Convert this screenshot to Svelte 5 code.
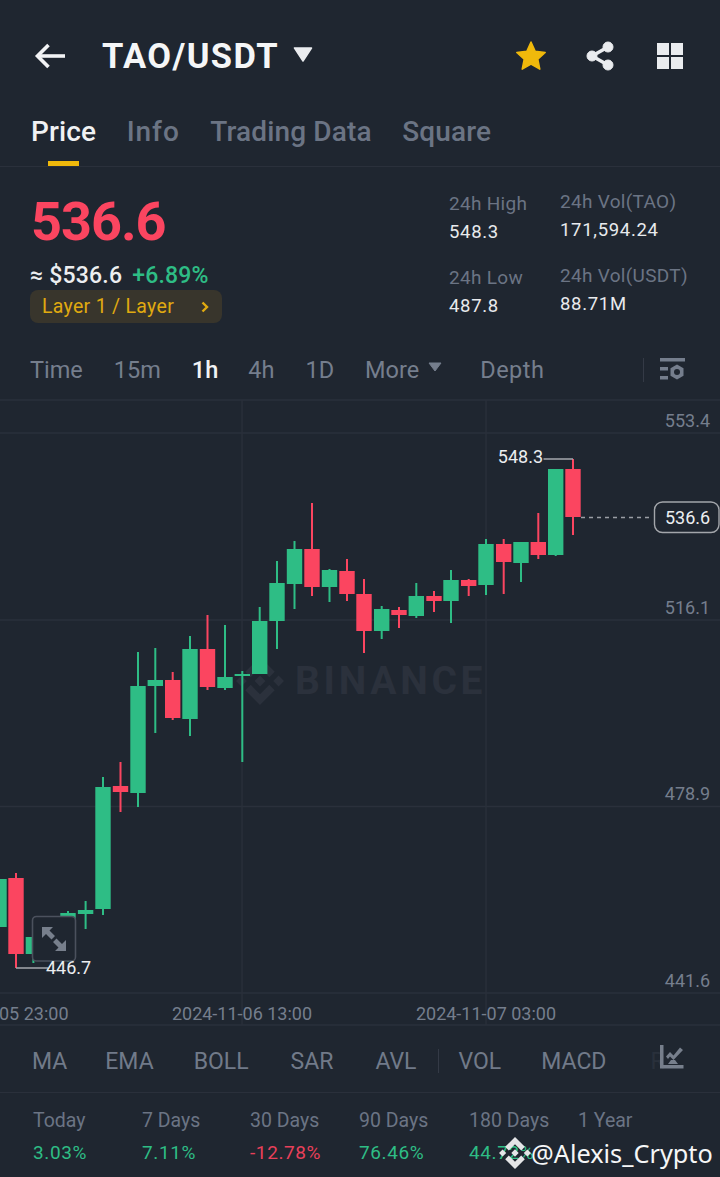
<script lang="ts">
  const tabs = ['Price', 'Info', 'Trading Data', 'Square'];
  const up = '#2ebd85';
  const down = '#fb4560';

  // [x, body top, body bottom, wick top, wick bottom, rising]
  const candles: [number, number, number, number, number, boolean][] = [
    [-1, 879, 927, 879, 927, true],
    [16, 878, 954, 873, 968, false],
    [33.4, 937, 954, 937, 963, true],
    [68, 913, 925, 911, 962, true],
    [85.6, 910, 914, 901, 929, true],
    [103, 787, 909, 777, 915, true],
    [120.5, 786, 792, 762, 812, false],
    [138, 686, 793, 652, 807, true],
    [155.3, 680, 686, 648, 733, true],
    [172.7, 680, 718, 672, 720, false],
    [190, 649, 719, 636, 736, true],
    [207.5, 649, 687, 615, 690, false],
    [225, 677, 688, 625, 690, true],
    [242.3, 674, 676, 671, 762, true],
    [259.7, 621, 674, 607, 674, true],
    [277, 583, 621, 561, 649, true],
    [294.5, 549, 584, 541, 609, true],
    [312, 549, 587, 503, 596, false],
    [329.5, 570, 587, 569, 602, true],
    [347, 571, 594, 559, 601, false],
    [364, 594, 631, 579, 653, false],
    [381.7, 609, 631, 606, 639, true],
    [399, 610, 615, 607, 628, false],
    [416.3, 596, 616, 583, 618, true],
    [434, 596, 601, 591, 612, false],
    [451, 580, 601, 570, 623, true],
    [468.7, 580, 586, 579, 596, false],
    [486, 544, 585, 539, 595, true],
    [503.7, 544, 562, 539, 594, false],
    [521, 542, 563, 542, 582, true],
    [538.3, 542, 555, 513, 559, false],
    [555.7, 469, 555, 469, 556, true],
    [573, 469, 517, 459, 535, false],
  ];

  const gridY = [433, 620, 806.5, 993];
  const gridX = [242, 486];
  const prices = [
    { label: '553.4', y: 421 },
    { label: '516.1', y: 608 },
    { label: '478.9', y: 794 },
    { label: '441.6', y: 981 },
  ];

  const logo =
    'M7.34 10.08 12 5.42l4.66 4.66 2.71-2.71L12 0 4.63 7.37l2.71 2.71zM0 12l2.71-2.71L5.42 12l-2.71 2.71L0 12zm7.34 1.92L12 18.58l4.66-4.66 2.71 2.71L12 24l-7.37-7.37 2.71-2.71zM18.58 12l2.71-2.71L24 12l-2.71 2.71L18.58 12zM14.75 12 12 9.25 9.97 11.28l-.23.23-.48.49L12 14.75 14.75 12z';

  const indicators = ['MA', 'EMA', 'BOLL', 'SAR', 'AVL'];
  const periods = [
    { name: 'Today', value: '3.03%', cls: 'pos' },
    { name: '7 Days', value: '7.11%', cls: 'pos' },
    { name: '30 Days', value: '-12.78%', cls: 'neg' },
    { name: '90 Days', value: '76.46%', cls: 'pos' },
    { name: '180 Days', value: '44.72%', cls: 'pos' },
    { name: '1 Year', value: '', cls: 'pos' },
  ];
</script>

<div class="screen">
  <header class="top">
    <svg class="back" width="32" height="28" viewBox="0 0 32 28" fill="none" stroke="#f2f3f5" stroke-width="3.6">
      <path d="M31 14H4" />
      <path d="M14.5 3 3.5 14l11 11" />
    </svg>
    <h1>TAO/USDT</h1>
    <svg class="caret" width="20" height="15" viewBox="0 0 20 15">
      <path d="M1.5 1h17L10 14z" fill="#eaecef" stroke="#eaecef" stroke-width="1.5" stroke-linejoin="round" />
    </svg>
    <div class="actions">
      <svg width="32" height="32" viewBox="0 0 32 32">
        <path d="M16 2l4.2 9.3 10 1.1-7.4 6.8 2 10L16 24.2 7.2 29.200l2-10-7.400-6.800 10-1.100z" fill="#f0b90b" stroke="#f0b90b" stroke-width="1.500" stroke-linejoin="round" />
      </svg>
      <svg width="30" height="32" viewBox="0 0 30 32" fill="#eaecef" stroke="#eaecef">
        <path d="M23 7 7 16l16 9" fill="none" stroke-width="3.500" />
        <circle cx="23" cy="7" r="5" />
        <circle cx="7" cy="16" r="5" />
        <circle cx="23" cy="25" r="5" />
      </svg>
      <svg class="apps" width="28" height="28" viewBox="0 0 28 28" fill="#eaecef">
        <rect x="1" y="1" width="12" height="12" />
        <rect x="15" y="1" width="12" height="12" />
        <rect x="1" y="15" width="12" height="12" />
        <rect x="15" y="15" width="12" height="12" />
      </svg>
    </div>
  </header>

  <nav class="tabs">
    {#each tabs as tab, i}
      <span class="tab" class:active={i === 0}>{tab}</span>
    {/each}
  </nav>

  <section class="summary">
    <div class="quote">
      <div class="last">536.6</div>
      <div class="fiat"><span>≈ $536.6</span><em>+6.89%</em></div>
      <div class="badge">
        <span>Layer 1 / Layer</span>
        <svg width="10" height="14" viewBox="0 0 10 14" fill="none" stroke="#e0aa10" stroke-width="2.400">
          <path d="M2.500 2.500 7 7l-4.500 4.500" />
        </svg>
      </div>
    </div>
    <div class="stats">
      <div class="stat low-col"><label>24h High</label><b>548.3</b></div>
      <div class="stat"><label>24h Vol(TAO)</label><b>171,594.24</b></div>
      <div class="stat low-col"><label>24h Low</label><b>487.8</b></div>
      <div class="stat"><label>24h Vol(USDT)</label><b>88.71M</b></div>
    </div>
  </section>

  <div class="frames">
    <span class="f-time">Time</span>
    <span class="f-15">15m</span>
    <span class="f-1h">1h</span>
    <span class="f-4h">4h</span>
    <span class="f-1d">1D</span>
    <span class="f-more">More</span>
    <svg class="mini-caret" width="14" height="10" viewBox="0 0 14 10"><path d="M1 1h12L7 9z" fill="#757e8d" stroke="#757e8d" stroke-linejoin="round" /></svg>
    <span class="f-depth">Depth</span>
    <i class="vbar"></i>
    <svg class="cfg" width="26" height="25" viewBox="0 0 26 25" fill="#757e8d">
      <rect x="0" y="1" width="25" height="3.500" />
      <rect x="0" y="10" width="8" height="3.500" />
      <rect x="0" y="19" width="8" height="3.500" />
      <path d="M17 7.500l6.500 3.700v7.600L17 22.500l-6.500-3.700v-7.600z" />
      <circle cx="17" cy="15" r="3" fill="#1f2630" />
    </svg>
  </div>

  <svg class="chart" width="720" height="627" viewBox="0 399 720 627">
    <line x1="0" x2="720" y1="400" y2="400" class="grid" />
    <line x1="0" x2="720" y1="1025" y2="1025" class="grid" />
    {#each gridY as y}
      <line x1="0" x2="720" y1={y} y2={y} class="grid" />
    {/each}
    {#each gridX as x}
      <line x1={x} x2={x} y1="400" y2="1025" class="grid" />
    {/each}

    <!-- watermark -->
    <path d={logo} transform="translate(236 657) scale(2)" fill="#2b313c" />
    <text x="295" y="694" class="mark">BINANCE</text>

    {#each candles as [x, top, bottom, wickTop, wickBottom, rising]}
      {@const color = rising ? up : down}
      <rect x={x - 1} y={wickTop} width="2" height={wickBottom - wickTop} fill={color} />
      <rect x={x - 7.700} y={top} width="15.400" height={Math.max(bottom - top, 2)} fill={color} />
    {/each}

    <!-- high / low markers -->
    <path d="M543.500 459H573" stroke="#a6a9ae" stroke-width="1.500" fill="none" />
    <text x="543" y="463" text-anchor="end" class="note">548.3</text>
    <path d="M16 968H48" stroke="#a6a9ae" stroke-width="1.500" fill="none" />

    <!-- last price -->
    <path d="M581 517.500H650" stroke="#9a9ea5" stroke-width="1.500" stroke-dasharray="4 4" fill="none" />
    <rect x="654.500" y="502" width="64.500" height="30.500" rx="8" fill="#1f2630" stroke="#a3a6ab" stroke-width="1.400" />
    <text x="665" y="524" class="note">536.6</text>

    <!-- expand button -->
    <rect x="32.500" y="916.500" width="43" height="44.500" rx="4" fill="#1f2630" stroke="#4b515d" stroke-width="1.600" />
    <path d="M42 927h11l-3.500 3.500 5.500 5.500-3.500 3.500-5.500-5.500L42 938zM66 951H55l3.500-3.500-5.500-5.500 3.500-3.500 5.500 5.500L66 940z" fill="#777f8c" />
    <text x="46" y="973.500" class="note">446.7</text>

    {#each prices as p}
      <text x="710" y={p.y + 5.500} text-anchor="end" class="axis">{p.label}</text>
    {/each}
    <text x="-1" y="1020" class="axis">05 23:00</text>
    <text x="242" y="1020" text-anchor="middle" class="axis">2024-11-06 13:00</text>
    <text x="486" y="1020" text-anchor="middle" class="axis">2024-11-07 03:00</text>
  </svg>

  <div class="indicators">
    {#each indicators as name}
      <span>{name}</span>
    {/each}
    <i class="vbar"></i>
    <span>VOL</span>
    <span>MACD</span>
    <span class="clipped">R</span>
    <svg class="trend" width="24" height="24" viewBox="0 0 24 24" fill="#777f8c">
      <path d="M0 0h3.500v20H23.500v3.500H0z" />
      <path d="M6 11.500 10 7l3.500 3.500L20 2.500l3 2.500-9.500 10-3.500-3.500L8 14z" />
      <path d="M8 19l3-4h4l3 4z" />
    </svg>
  </div>

  <div class="periods">
    {#each periods as p}
      <div class="period">
        <label>{p.name}</label>
        <b class={p.cls}>{p.value}</b>
      </div>
    {/each}
  </div>

  <div class="credit">
    <svg width="32" height="32" viewBox="0 0 24 24"><path d={logo} fill="#e4e5e7" /></svg>
    <span>@Alexis_Crypto</span>
  </div>
</div>

<style>
  :global(body) {
    margin: 0;
    background: #1f2630;
  }

  .screen {
    position: relative;
    width: 720px;
    height: 1177px;
    overflow: hidden;
    background: #1f2630;
    font-family: Roboto, "Liberation Sans", sans-serif;
    color: #757e8d;
  }

  .top {
    height: 111px;
    box-sizing: border-box;
    padding-left: 34px;
    display: flex;
    align-items: center;
  }

  .back {
    flex: none;
  }

  h1 {
    margin: 0 0 0 36px;
    font-size: 34.500px;
    font-weight: 700;
    color: #f5f6f7;
    letter-spacing: 1.400px;
  }

  .caret {
    margin: 0 0 2px 14px;
  }

  .actions {
    margin-left: auto;
    padding-right: 36px;
    display: flex;
    align-items: center;
    gap: 38px;
  }

  .apps {
    margin-left: 3.500px;
  }

  .tabs {
    height: 56px;
    box-sizing: border-box;
    padding: 3px 0 0 31px;
    display: flex;
    gap: 30.500px;
    align-items: flex-start;
    border-bottom: 1px solid #2a303b;
    font-size: 28px;
    font-weight: 500;
    letter-spacing: 0.150px;
    color: #6b7484;
  }

  .tab {
    position: relative;
    line-height: 33px;
    padding-top: 1px;
  }

  .tab:nth-child(2) {
    letter-spacing: 0.900px;
  }

  .tab.active {
    color: #f0f1f3;
  }

  .tab.active::after {
    content: '';
    position: absolute;
    left: 17px;
    width: 31px;
    height: 5px;
    top: 47px;
    background: #f0b90b;
  }

  .summary {
    height: 175px;
    box-sizing: border-box;
    position: relative;
    display: flex;
    justify-content: space-between;
  }

  .quote {
    padding: 24px 0 0 30px;
  }

  .last {
    font-size: 54px;
    line-height: 62px;
    font-weight: 700;
    letter-spacing: -1px;
    color: #fb4560;
    margin-left: 1px;
  }

  .fiat {
    margin-top: 8px;
    font-size: 23px;
    line-height: 30px;
    font-weight: 500;
    letter-spacing: 0.200px;
    color: #eceef0;
    display: flex;
    gap: 10px;
  }

  .fiat em {
    font-style: normal;
    color: #2ebd85;
  }

  .badge {
    width: 192px;
    height: 33px;
    box-sizing: border-box;
    margin-top: -1px;
    padding: 0 12px;
    display: flex;
    align-items: center;
    justify-content: space-between;
    background: #38352c;
    border-radius: 8px;
    font-size: 19.500px;
    letter-spacing: 0.300px;
    color: #e0aa10;
  }

  .stats {
    width: 271px;
    padding-top: 25px;
    display: grid;
    grid-template-columns: 111px 160px;
    grid-auto-rows: 74px;
    align-content: start;
  }

  .stat {
    display: flex;
    flex-direction: column;
    margin-top: -2px;
  }

  .stat.low-col {
    margin-top: 0;
  }

  .stat label {
    font-size: 19px;
    line-height: 24px;
    letter-spacing: 0.300px;
    color: #6b7484;
  }

  .stat b {
    margin-top: 4px;
    font-size: 18.500px;
    line-height: 24px;
    font-weight: 400;
    letter-spacing: 0.700px;
    color: #e8eaed;
  }

  .frames {
    height: 57px;
    box-sizing: border-box;
    padding-bottom: 2px;
    display: flex;
    align-items: center;
    font-size: 23.500px;
    color: #757e8d;
  }

  .f-time { margin-left: 30px; }
  .f-15 { margin-left: 31px; }
  .f-1h { margin-left: 31px; color: #f2f3f5; font-weight: 500; }
  .f-4h { margin-left: 30px; }
  .f-1d { margin-left: 31px; }
  .f-more { margin-left: 31px; }
  .mini-caret { margin: 0 0 6px 9px; }
  .f-depth { margin-left: 38px; letter-spacing: 0.500px; }

  .vbar {
    display: block;
    width: 1px;
    background: #343a46;
    height: 24px;
  }

  .frames .vbar {
    margin-left: 99px;
  }

  .cfg {
    margin-left: 16px;
  }

  .chart {
    display: block;
    font-family: Roboto, "Liberation Sans", sans-serif;
  }

  .grid {
    stroke: #2a303b;
    stroke-width: 1.300;
  }

  .mark {
    font-size: 39px;
    font-weight: 700;
    letter-spacing: 3.700px;
    fill: #2b313c;
  }

  .note {
    font-size: 18px;
    fill: #eceef0;
  }

  .axis {
    font-size: 18px;
    fill: #757e8d;
  }

  .indicators {
    height: 67px;
    box-sizing: border-box;
    padding: 4px 0 0 32px;
    display: flex;
    align-items: center;
    gap: 40px;
    border-bottom: 1px solid #2a303b;
    font-size: 23px;
    color: #717a89;
  }

  .indicators span:nth-child(2) { margin-left: -2px; }
  .indicators span:nth-child(4) { margin-left: 2px; }
  .indicators span:nth-child(5) { margin-left: 2px; }

  .indicators .vbar {
    margin: 0 -20px 0 -19px;
  }

  .clipped {
    opacity: 0.12;
    margin-left: 4px;
  }

  .trend {
    margin: -8px 0 0 -45px;
  }

  .periods {
    padding: 16px 0 0 33px;
    display: grid;
    grid-template-columns: 109px 108px 109px 110px 109px 100px;
  }

  .period {
    display: flex;
    flex-direction: column;
  }

  .period label {
    font-size: 19.500px;
    line-height: 24px;
    color: #6b7484;
  }

  .period b {
    margin-top: 8px;
    font-size: 19px;
    line-height: 24px;
    font-weight: 400;
    letter-spacing: 0.600px;
  }

  .pos { color: #2ebd85; }
  .neg { color: #e8405a; }

  .credit {
    position: absolute;
    left: 499px;
    top: 1137px;
    display: flex;
    align-items: center;
    font-family: "Noto Sans", sans-serif;
    font-size: 25.300px;
    line-height: 32px;
    color: #f5f6f7;
  }
</style>
